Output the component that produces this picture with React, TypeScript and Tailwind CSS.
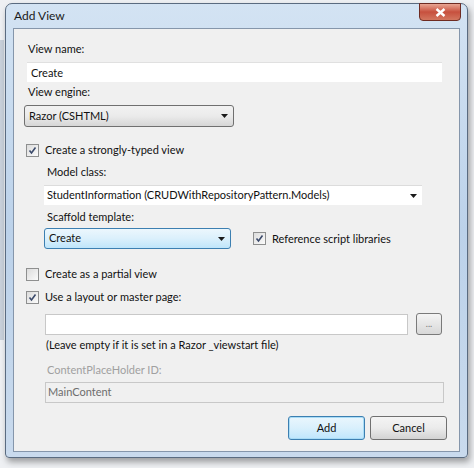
import React from 'react';

const font = { fontFamily: 'Lato, "Noto Sans", sans-serif' };

function Arrow() {
    return (
        <svg width="7" height="4" viewBox="0 0 7 4" className="shrink-0">
            <path d="M0 0 H7 L3.5 4 Z" fill="#1a1a1a" />
        </svg>
    );
}

function Check({ checked }: { checked: boolean }) {
    return (
        <div className="w-[13px] h-[13px] border border-[#8e8f8f] bg-gradient-to-br from-[#dcdcdc] to-[#fbfbfb] flex items-center justify-center shrink-0">
            {checked && (
                <svg width="9" height="9" viewBox="0 0 9 9">
                    <path d="M1.5 4.5 L3.5 7 L7.5 1.5" stroke="#3b4a6b" strokeWidth="1.6" fill="none" />
                </svg>
            )}
        </div>
    );
}

function App() {
    return (
        <div className="w-[474px] h-[468px] bg-[#eef0f3] relative overflow-hidden text-[11px] text-[#111]" style={font}>
            {/* background window edge */}
            <div className="absolute left-0 top-[40px] w-[4px] h-[300px] bg-[#c8d0da]" />
            <div className="ml-[5px] mt-[3px] w-[463px] h-[455px] rounded-t-[7px] rounded-b-[4px] border border-[#5a6b80] bg-gradient-to-b from-[#d3e3f3] via-[#bcd2ea] to-[#c9daed] shadow-[2px_4px_6px_rgba(0,0,0,0.35)] relative flex flex-col">
                <div className="h-[24px] flex items-center pl-[8px] text-[12px] text-[#1a1a1a]">Add View</div>
                {/* close button */}
                <div className="absolute right-[6px] top-[-1px] w-[42px] h-[18px] rounded-b-[4px] border border-[#6e2b22] bg-gradient-to-b from-[#e8a593] via-[#c7503e] to-[#d2765f] flex items-center justify-center">
                    <svg width="11" height="9" viewBox="0 0 11 9">
                        <path d="M1.5 1 L9.5 8 M9.5 1 L1.5 8" stroke="#ffffff" strokeWidth="2.4" />
                    </svg>
                </div>
                <div className="mx-[7px] mb-[5px] flex-1 border border-[#8596ab] bg-[#f0f0f0] flex flex-col pl-[10px] pr-[17px]">
                    <div className="mt-[12px] ml-[4px] leading-[16px]">View name:</div>
                    <div className="mt-[5px] ml-[3px] h-[20px] bg-white border-t border-[#e0e0e0] flex items-center pl-[4px] leading-[16px]">Create</div>
                    <div className="mt-[2px] ml-[4px] leading-[16px]">View engine:</div>
                    <div className="mt-[5px] w-[210px] h-[22px] rounded-[3px] border border-[#707070] bg-gradient-to-b from-[#f2f2f2] via-[#ebebeb] to-[#d6d6d6] flex items-center justify-between pl-[4px] pr-[5px]">
                        <span>Razor (CSHTML)</span>
                        <Arrow />
                    </div>
                    <div className="mt-[15px] ml-[2px] flex items-center gap-[6px] leading-[16px]">
                        <Check checked />
                        <span>Create a strongly-typed view</span>
                    </div>
                    <div className="ml-[20px] flex flex-col">
                        <div className="mt-[6px] ml-[3px] leading-[16px]">Model class:</div>
                        <div className="mt-[5px] w-[378px] h-[20px] bg-white border-t border-[#dcdcdc] flex items-center justify-between pl-[3px] pr-[5px]">
                            <span>StudentInformation (CRUDWithRepositoryPattern.Models)</span>
                            <Arrow />
                        </div>
                        <div className="mt-[4px] ml-[3px] leading-[16px]">Scaffold template:</div>
                        <div className="mt-[3px] flex items-center">
                            <div className="w-[187px] h-[21px] rounded-[3px] border border-[#3c7fb1] bg-gradient-to-b from-[#ecf7fd] via-[#dbf0fc] to-[#bfe5fa] flex items-center justify-between pl-[4px] pr-[5px]">
                                <span>Create</span>
                                <Arrow />
                            </div>
                            <div className="ml-[22px] flex items-center gap-[6px] leading-[16px]">
                                <Check checked />
                                <span>Reference script libraries</span>
                            </div>
                        </div>
                    </div>
                    <div className="mt-[17px] ml-[2px] flex items-center gap-[6px] leading-[16px]">
                        <Check checked={false} />
                        <span>Create as a partial view</span>
                    </div>
                    <div className="mt-[7px] ml-[2px] flex items-center gap-[6px] leading-[16px]">
                        <Check checked />
                        <span>Use a layout or master page:</span>
                    </div>
                    <div className="ml-[21px] flex flex-col">
                        <div className="mt-[8px] flex items-center">
                            <div className="w-[363px] h-[21px] bg-white border border-[#c8c8c8]" />
                            <div className="ml-[8px] w-[26px] h-[22px] rounded-[3px] border border-[#7a7a7a] bg-gradient-to-b from-[#f4f4f4] to-[#d8d8d8] flex items-center justify-center text-[9px] text-[#777] leading-none pb-[2px]">...</div>
                        </div>
                        <div className="mt-[2px] ml-[1px] leading-[16px]">(Leave empty if it is set in a Razor _viewstart file)</div>
                        <div className="mt-[9px] ml-[2px] leading-[16px] text-[#a0a0a0]">ContentPlaceHolder ID:</div>
                        <div className="mt-[4px] w-[399px] h-[21px] border border-[#c8c8c8] bg-[#f0f0f0] flex items-center pl-[2px] text-[#6d6d6d]">MainContent</div>
                    </div>
                    <div className="mt-[13px] flex justify-end gap-[5px] mr-[-5px]">
                        <div className="w-[77px] h-[24px] rounded-[3px] border border-[#3c7fb1] bg-gradient-to-b from-[#eaf6fd] via-[#d9f0fc] to-[#bee6fd] shadow-[inset_0_0_0_1px_#a9dcf6] flex items-center justify-center">Add</div>
                        <div className="w-[77px] h-[24px] rounded-[3px] border border-[#707070] bg-gradient-to-b from-[#f4f4f4] via-[#ebebeb] to-[#d3d3d3] flex items-center justify-center">Cancel</div>
                    </div>
                </div>
            </div>
        </div>
    );
}

export default App;
